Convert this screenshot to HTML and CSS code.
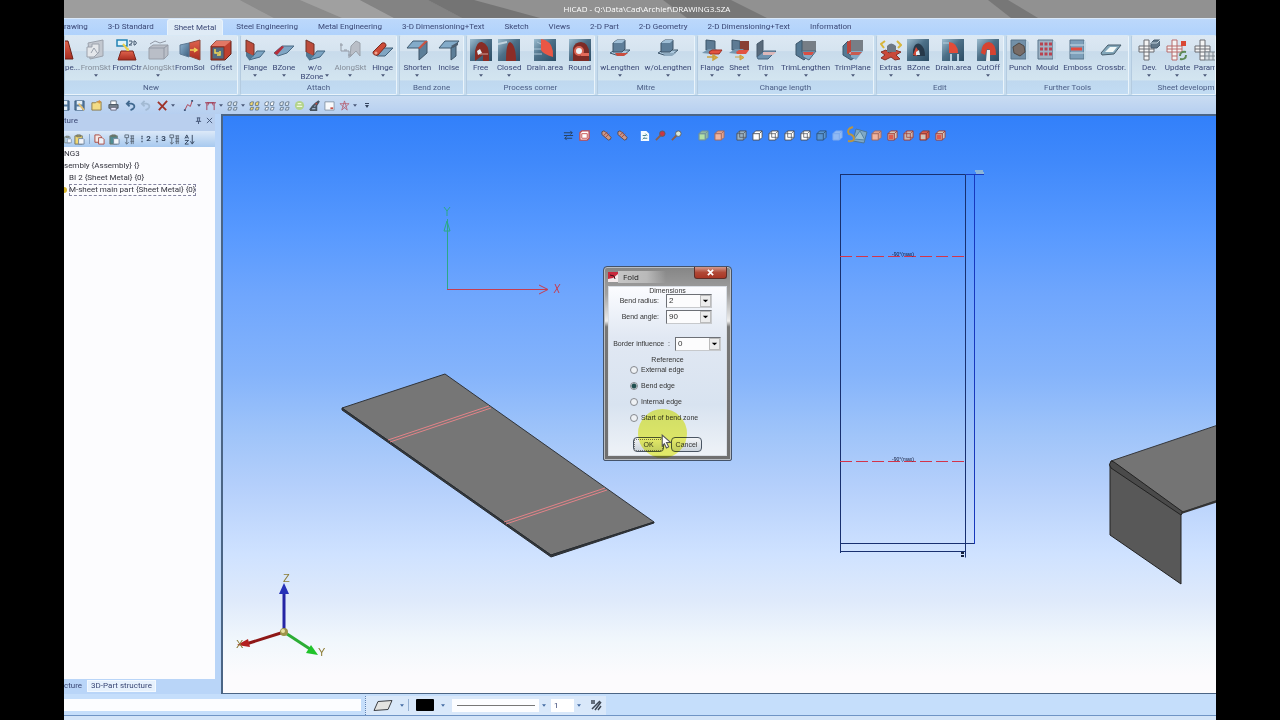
FILE: index.html
```html
<!DOCTYPE html>
<html lang="en">
<head>
<meta charset="utf-8">
<title>HiCAD - Q:\Data\Cad\Archief\DRAWING3.SZA</title>
<link rel="stylesheet" href="styles.css">
</head>
<body>
<svg class="defs" aria-hidden="true">
<defs>
<linearGradient id="steel" x1="0" y1="0" x2="1" y2="1"><stop offset="0" stop-color="#8fb4d2"/><stop offset="1" stop-color="#3c5d7c"/></linearGradient>
<linearGradient id="photo" x1="0" y1="0" x2="1" y2="1"><stop offset="0" stop-color="#9dbdd0"/><stop offset=".45" stop-color="#4d7088"/><stop offset="1" stop-color="#2c4c64"/></linearGradient>
<linearGradient id="red" x1="0" y1="0" x2="0" y2="1"><stop offset="0" stop-color="#e0644e"/><stop offset="1" stop-color="#a82c20"/></linearGradient>
</defs>
<symbol id="cone" viewBox="0 0 22 22"><path d="M6 2h10l5 18H1z" fill="url(#red)" stroke="#6b2018"/></symbol>
<symbol id="sketch" viewBox="0 0 22 22"><path d="M3 4l15-3v16l-13 3z" fill="#c3c8d0" stroke="#9ba2ad"/><path d="M2 8h5v-3h7v8l-5 5H2zM6 14l3-5 4 6" fill="#e4e7eb" stroke="#9aa1ac"/></symbol>
<symbol id="contour" viewBox="0 0 22 22"><path d="M5 12h12l3 9H2z" fill="url(#red)" stroke="#7c261c"/><path d="M1 1h10v6H1z" fill="#dff3fa" stroke="#2382b4" stroke-width="1.5"/><path d="M7 5l5 6" stroke="#ead04a" stroke-width="2"/><path d="M10 12l3 0 0-3z" fill="#ead04a"/><path d="M13 2h3v2l-3 2h3M18 2v4h1q3-2 0-4z" fill="none" stroke="#465a70"/></symbol>
<symbol id="along" viewBox="0 0 22 22"><path d="M2 9l4-3h15v10l-4 4H2z" fill="#b9bec7" stroke="#999fa9"/><path d="M2 9h15v11M17 9l4-3M3 5l5-3 5 2 6-2" fill="none" stroke="#9299a5"/></symbol>
<symbol id="solid" viewBox="0 0 22 22"><path d="M10 4l11-3v20l-11-4z" fill="url(#red)" stroke="#8c4a3e"/><path d="M1 6l9-2v14l-9-3z" fill="url(#steel)" stroke="#5c7994"/><path d="M11 11h6M15 9l3 2-3 2" fill="none" stroke="#f2d257" stroke-width="1.5"/></symbol>
<symbol id="offset" viewBox="0 0 22 22"><path d="M1 7l5-5h15v13l-6 6H1z" fill="#bf4030" stroke="#642018"/><path d="M2 8h12v12H2z" fill="#526a80" stroke="#813025"/><path d="M1 7l5-5h15l-6 5z" fill="#e27765"/><path d="M5 10v4h4M10 12v4h-3" fill="none" stroke="#f3d855" stroke-width="1.5"/></symbol>
<symbol id="flange" viewBox="0 0 22 22"><path d="M2 1l8 4v13l-8-5z" fill="#bd4c3c" stroke="#713027"/><path d="M10 16l3-4h8l-5 6-11 3z" fill="#7ba4c3" stroke="#456782"/><path d="M2 13l8 4-5 4-3-4z" fill="#537894"/></symbol>
<symbol id="plate" viewBox="0 0 22 22"><path d="M1 14l8-7h12l-7 7-9 3z" fill="#7fa5c4" stroke="#4c6b84"/><path d="M1 14l8-7 2 1-7 8z" fill="#b72e3b"/></symbol>
<symbol id="alongsmall" viewBox="0 0 22 22"><path d="M12 7l5-5 4 2v13l-4-5-6 6z" fill="#b9bec7" stroke="#9aa1aa"/><path d="M2 4v8h8v7M1 6h3M5 11h3M9 16h4" fill="none" stroke="#939aa5"/></symbol>
<symbol id="hinge" viewBox="0 0 22 22"><path d="M4 16l8-7h9l-8 8H5z" fill="#80a5c2" stroke="#426079"/><path d="M1 13L10 4q4-1 4 3L6 16q-5 1-5-3z" fill="#cc4b38" stroke="#7a2a20"/><circle cx="4" cy="14" r="1.5" fill="#f0a390"/></symbol>
<symbol id="bend" viewBox="0 0 22 22"><path d="M1 9l6-7h14l-6 7z" fill="#83abc9" stroke="#405a70"/><path d="M13 9l8-6v11l-8 7z" fill="#5c7e98" stroke="#3e5568"/><path d="M12 9l7-7h3l-8 8z" fill="#c95342"/></symbol>
<symbol id="incise" viewBox="0 0 22 22"><path d="M1 9l6-7h14l-6 7z" fill="#83abc9" stroke="#405a70"/><path d="M13 9l5-3v11l-5 4z" fill="#5c7e98" stroke="#3e5568"/><path d="M13 7l7-4v3l-5 3z" fill="#4c5e70"/></symbol>
<symbol id="free" viewBox="0 0 22 22"><path d="M0 0h22v22H0z" fill="url(#photo)"/><path d="M5 22V12Q7 2 12 3q7 2 7 14v5h-6v-6z" fill="#892c25"/><path d="M7 12l3-2 2 4-4 2z" fill="#e8eff4"/><path d="M10 15h8" stroke="#d3a19b"/></symbol>
<symbol id="closed" viewBox="0 0 22 22"><path d="M0 0h22v22H0z" fill="url(#photo)"/><path d="M8 22Q8 4 12 3q6 3 6 19z" fill="#8c2d26"/><path d="M0 5l9-2" stroke="#c1d3df" stroke-width="2"/></symbol>
<symbol id="drain" viewBox="0 0 22 22"><path d="M0 0h22v22H0z" fill="url(#photo)"/><path d="M7 0v11q2 4 12 7Q20 5 11 1z" fill="#ea5745"/><path d="M0 10h7M0 15h8M3 3l4 2" stroke="#abc4d5"/></symbol>
<symbol id="drainedit" viewBox="0 0 22 22"><path d="M0 0h22v22H0z" fill="url(#photo)"/><path d="M7 14V3q9 1 9 11z" fill="#e24c38"/><path d="M9 15v7M16 15v7" stroke="#b5cddc" stroke-width="2"/><path d="M1 4h6" stroke="#b5cddc"/></symbol>
<symbol id="zoneedit" viewBox="0 0 22 22"><path d="M0 0h22v22H0z" fill="url(#photo)"/><path d="M6 17V11Q8 3 13 5q5 3 5 12z" fill="#27394a"/><path d="M6 16l3-8 2 3-1 6z" fill="#d54835"/><path d="M9 13l3-2 1 5H9z" fill="#e8eff4"/></symbol>
<symbol id="round" viewBox="0 0 22 22"><path d="M0 0h22v22H0z" fill="url(#photo)"/><path d="M4 22V9q2-6 8-6 8 1 8 11v8z" fill="#7d2b26"/><circle cx="10" cy="12" r="4" fill="#eef2f5" stroke="#d96554" stroke-width="2"/><path d="M12 14h8v3h-8z" fill="#e46a5a"/></symbol>
<symbol id="mitre" viewBox="0 0 22 22"><path d="M1 14l5-3h15l-6 5H7z" fill="#a9c6dc" stroke="#3e566b"/><path d="M6 14h13l-4 3H8z" fill="var(--accent)"/><path d="M4 4l4-3h8v9l-3 3H4z" fill="#5e7e99" stroke="#3d5367"/><path d="M4 4l4-3h8l-3 3z" fill="#a0bfd7"/></symbol>
<symbol id="pull" viewBox="0 0 22 22"><path d="M5 1l9 1v9H5z" fill="#5d7b94" stroke="#3d566b"/><path d="M1 14l6-4h9l-6 5z" fill="#7597b0"/><path d="M8 13l3-2h10l-3 4H9z" fill="#e25341" stroke="#9d3025"/><path d="M6 18h7M12 16l4 2.500-4 2.500z" fill="#dcb04d" stroke="#cca23f" stroke-width="1.500"/></symbol>
<symbol id="pullsheet" viewBox="0 0 22 22"><path d="M4 1l8 1v9H4z" fill="#5d7b94" stroke="#3d566b"/><path d="M12 2l9 0v9h-9z" fill="#893f35"/><path d="M1 14l6-4h9l-6 5z" fill="#7597b0"/><path d="M8 13l3-2h10l-3 4H9z" fill="#e25341"/><path d="M7 18h6M12 16l4 2.500-4 2.500z" fill="#dcb04d" stroke="#cca23f"/></symbol>
<symbol id="trim" viewBox="0 0 22 22"><path d="M2 5l6-4v12l-6 5z" fill="#596a7b" stroke="#46596a"/><path d="M2 18l7-6h12l-8 8H3z" fill="#6f93b0" stroke="#486680"/><path d="M8 13h13l-3 3H8z" fill="#ddb8b9"/></symbol>
<symbol id="box" viewBox="0 0 22 22"><path d="M6 2h15v10H6z" fill="#777e86"/><path d="M1 5l6-4v12l5 5-3 3-8-5z" fill="#547893" stroke="#3d566b"/><path d="M7 12h14l-7 9-6-3z" fill="#83a9c6" stroke="#4b687f"/><path d="M8 13h11l-2 3H9z" fill="#d84e43"/></symbol>
<symbol id="boxplane" viewBox="0 0 22 22"><path d="M8 1h13v11H8z" fill="#777e86"/><path d="M1 7l5-5v12l6 5-3 2-8-5z" fill="#547893" stroke="#3d566b"/><path d="M5 3l4-2v12l-4 2z" fill="#bb443b"/><path d="M9 12h12l-7 9-5-3z" fill="#83a9c6"/><path d="M9 13h11l-3 3h-9z" fill="#c95b50"/></symbol>
<symbol id="extras" viewBox="0 0 22 22"><path d="M1 13l5-2 3 3 6-3 6 2-5 3 4 4-5 1-4-3-6 3-4-2 4-3z" fill="#c9493a" stroke="#823229"/><path d="M7 7q4-5 9 0v6H7z" fill="#6d7884"/><path d="M5 2L1 5l3 4M17 2l4 4-3 3" fill="none" stroke="#d8b63b" stroke-width="2"/></symbol>
<symbol id="cut" viewBox="0 0 22 22"><path d="M0 0h22v22H0z" fill="url(#photo)"/><path d="M4 14Q5 3 12 3q7 1 7 13h-6q1-7-3-6l-2 6z" fill="#d74331"/><path d="M10 11h3v11H9z" fill="#e7edf1"/></symbol>
<symbol id="punch" viewBox="0 0 22 22"><path d="M2 1h15v19H2z" fill="#7290a8" stroke="#58748b"/><path d="M17 1l3 2v17h-3z" fill="#c2d7e5"/><path d="M10 4l5 3 1 6-5 4-6-3-1-6z" fill="#786c66" stroke="#4f4945"/></symbol>
<symbol id="mould" viewBox="0 0 22 22"><path d="M2 1h15v19H2z" fill="#9db2c4" stroke="#58748b"/><path d="M17 1l3 2v17h-3z" fill="#c2d7e5"/><path d="M4 5h12M4 10h12M4 15h12" stroke="#ba4250" stroke-width="3" stroke-dasharray="3 1.500"/></symbol>
<symbol id="emboss" viewBox="0 0 22 22"><path d="M3 1h14v19H3z" fill="#7d9fba" stroke="#58748b"/><path d="M17 1l2 2v17h-2z" fill="#c2d7e5"/><path d="M3 6h14M3 14h14" stroke="#c9dde9"/><path d="M4 10h11" stroke="#e14c40" stroke-width="3"/></symbol>
<symbol id="cross" viewBox="0 0 22 22"><path d="M1 14l7-8h13l-7 9-12 1z" fill="#83a7ba" stroke="#465d6c"/><path d="M5 13l5-5h7l-4 5z" fill="#f1f8f8"/></symbol>
<symbol id="dev" viewBox="0 0 22 22"><path d="M6 1h5v6h5v6h-5v8H6v-8H1V7h5zM6 7h5v6H6zM1 10h15M6 17h5" fill="#f4f4f4" stroke="var(--line,#6b6d72)"/></symbol>
<symbol id="devbox" viewBox="0 0 22 22"><use href="#dev"/><path d="M13 4l3-3h6v5l-3 3h-6z" fill="#617789" stroke="#485d6e"/><path d="M13 4h6l3-3" fill="none" stroke="#c1d2dd"/></symbol>
<symbol id="devnew" viewBox="0 0 22 22"><use href="#dev"/><path d="M15 2h5v5h-5z" fill="#da4834"/><path d="M14 17q0-5 6-4M20 16q0 5-6 4" fill="none" stroke="#5d8956" stroke-width="2"/></symbol>
<symbol id="devtable" viewBox="0 0 22 22"><use href="#dev"/><path d="M11 13h11v8H11zM11 17h11M15 13v8M19 13v8" fill="#d8dee3" stroke="#7d8790"/></symbol>
<symbol id="cube" viewBox="0 0 12 12"><path d="M1 4l3-3h7v7l-3 3H1z" fill="var(--face)" stroke="var(--edge)"/><path d="M1 4h7v7M8 4l3-3" fill="none" stroke="var(--edge)"/><path d="M2 5h5v5H2z" fill="var(--front,transparent)"/></symbol>
<symbol id="wire" viewBox="0 0 12 12"><path d="M1 4l3-3h7v7l-3 3H1z" fill="var(--face)" stroke="var(--edge)"/><path d="M1 4h7v7M8 4l3-3M4 1v7h7" fill="none" stroke="var(--edge)" stroke-width=".8"/></symbol>
<symbol id="box2" viewBox="0 0 12 12"><path d="M1 3l2-2h8v8l-2 2H1z" fill="#fff" stroke="var(--edge)" stroke-width="1.500"/><path d="M3 4h6v5H3z" fill="none" stroke="var(--edge)"/></symbol>
<symbol id="link" viewBox="0 0 12 12"><path d="M1 2q2-2 4 0l6 6q0 3-3 3L1 5z" fill="#c9988b" stroke="#5d4a4c"/><path d="M3 6l4-4M5 8l4-4" stroke="#a0463f"/></symbol>
<symbol id="swap" viewBox="0 0 12 12"><path d="M1 3h9M8 1l2 2-2 2M11 6H1M10 9H2M4 7L2 9l2 2" fill="none" stroke="#263d55"/></symbol>
<symbol id="sheetpage" viewBox="0 0 12 12"><path d="M2 1h6l3 3v8H2z" fill="#f5fbff"/><path d="M4 6h4M7 4l2 2M9 9H5M6 8L4 10" stroke="#397b88"/></symbol>
<symbol id="lens" viewBox="0 0 12 12"><path d="M1 11l5-5" stroke="#8b5f4c" stroke-width="2"/><circle cx="8" cy="4" r="3" fill="var(--face)" stroke="#5c5e63"/></symbol>
<symbol id="save" viewBox="0 0 12 12"><path d="M1 1h10v10H1z" fill="#557a9f" stroke="#39597a"/><path d="M3 1h6v4H3zM3 7h6v4H3z" fill="#e3eef6"/></symbol>
<symbol id="saveas" viewBox="0 0 12 12"><use href="#save"/><path d="M5 4l6 7" stroke="#e1bd72" stroke-width="2"/></symbol>
<symbol id="folder" viewBox="0 0 12 12"><path d="M1 3h4l1-1h5v9H1z" fill="#f3dc86" stroke="#8b7947"/><path d="M9 0v4M7 2h4" stroke="#df8d34"/></symbol>
<symbol id="printer" viewBox="0 0 12 12"><path d="M3 1h6v4H3z" fill="#fff" stroke="#64707d"/><path d="M1 5h10v4H1z" fill="#78838e" stroke="#48545f"/><path d="M3 8h6v3H3z" fill="#eef" stroke="#667"/></symbol>
<symbol id="undo" viewBox="0 0 12 12"><path d="M2 4h5q4 1 3 4-1 2-4 3M5 1L2 4l3 3" fill="none" stroke="currentColor" stroke-width="2"/></symbol>
<symbol id="delete" viewBox="0 0 12 12"><path d="M1 2l9 9M11 1L2 11" stroke="#9e3329" stroke-width="2"/></symbol>
<symbol id="poly" viewBox="0 0 12 12"><path d="M2 11l3-6 3 2 2-6" fill="none" stroke="#ad3b4c"/><path d="M1 10h2v2H1zM9 0h2v2H9z" fill="#3e557b"/></symbol>
<symbol id="gate" viewBox="0 0 12 12"><path d="M2 11V3h8v8M0 3h12M4 3l-1 3M8 3l1 3" fill="none" stroke="#a33c53"/></symbol>
<symbol id="pairs" viewBox="0 0 12 12"><path d="M1 3l2-1h2L4 6H1zM7 3l2-1h2l-1 4H7zM2 8h3l-1 3H1zM8 8h3l-1 3H7z" fill="var(--face,#dce6ec)" stroke="#53677b" stroke-width=".8"/></symbol>
<symbol id="globe" viewBox="0 0 12 12"><circle cx="6" cy="6" r="5" fill="#b3d38b"/><path d="M3 7h6M4 4h4" stroke="#eff8d9" stroke-width="1.500"/></symbol>
<symbol id="robot" viewBox="0 0 12 12"><path d="M1 11h7V6L11 1M1 11l3-4 3-3 4-3M3 8h5" fill="none" stroke="#475461" stroke-width="2"/><circle cx="8" cy="4" r="1" fill="#ce4940"/></symbol>
<symbol id="window" viewBox="0 0 12 12"><path d="M1 2h10v9H1z" fill="#f8fafc" stroke="#8495a7"/><path d="M7 8h3v2H7z" fill="#c64f45"/></symbol>
<symbol id="star" viewBox="0 0 12 12"><path d="M1 4h10L3 11 6 1l3 10z" fill="none" stroke="#b4586a" stroke-width=".8"/></symbol>
<symbol id="copy" viewBox="0 0 12 12"><path d="M1 1h5l2 2v6H1z" fill="#f5e9e6" stroke="#a9453a"/><path d="M5 4h4l2 2v5H5z" fill="#edf3fa" stroke="#ac4b43"/></symbol>
<symbol id="paste" viewBox="0 0 12 12"><path d="M1 2h8v9H1zM3 1h4v2H3z" fill="var(--face)" stroke="#6d7163"/><path d="M5 5h5l1 1v5H5z" fill="#f3f6fa" stroke="#7187a0"/></symbol>
<symbol id="tree" viewBox="0 0 12 12"><path d="M1 1h4v3H1zM3 4v7M1 9l2 2 2-2M7 2h4M7 5h4M7 8h4M8 2v9M10 2v9" fill="none" stroke="#5b6979"/></symbol>
<symbol id="down" viewBox="0 0 5 3"><path d="M0 0h5L2.500 3z" fill="currentColor"/></symbol>
</svg>

<div class="app">
<header class="title">
<svg class="gloss" viewBox="0 0 1152 18" preserveAspectRatio="none" aria-hidden="true">
<path d="M0 0h176l34 18H0z" fill="#9d9d9d"/><path d="M176 0h60l42 18h-68z" fill="#8b8b8b"/><path d="M236 0h60l34 18h-52z" fill="#a0a0a0"/><path d="M296 0h68l34 18h-68z" fill="#838383"/><path d="M364 0h46l66 18h-78z" fill="#747474"/><path d="M599 0h68l36 18h-80z" fill="#777"/><path d="M924 0h20l30 18h-27z" fill="#777"/>
</svg>
<h1>HiCAD - Q:\Data\Cad\Archief\DRAWING3.SZA</h1>
</header>
<nav class="tabs">
<button class="first">rawing</button><button>3-D Standard</button><button class="active">Sheet Metal</button><button>Steel Engineering</button><button>Metal Engineering</button><button>3-D Dimensioning+Text</button><button>Sketch</button><button>Views</button><button>2-D Part</button><button>2-D Geometry</button><button>2-D Dimensioning+Text</button><button>Information</button>
</nav>
<div class="ribbon">
<section class="group g-new"><div class="tools even">
<button class="clipped"><svg><use href="#cone"/></svg>pe...</button>
<button class="off"><svg><use href="#sketch"/></svg>FromSkt<svg class="caret"><use href="#down"/></svg></button>
<button><svg><use href="#contour"/></svg>FromCtr</button>
<button class="off"><svg><use href="#along"/></svg>AlongSkt<svg class="caret"><use href="#down"/></svg></button>
<button><svg><use href="#solid"/></svg>FromSol</button>
<button><svg><use href="#offset"/></svg>Offset</button></div><h2>New</h2></section>
<section class="group g-attach"><div class="tools">
<button><svg><use href="#flange"/></svg>Flange<svg class="caret"><use href="#down"/></svg></button>
<button><svg><use href="#plate"/></svg>BZone<svg class="caret"><use href="#down"/></svg></button>
<button><svg><use href="#flange"/></svg>w/o<span>BZone <svg class="caret"><use href="#down"/></svg></span></button>
<button class="off"><svg><use href="#alongsmall"/></svg>AlongSkt<svg class="caret"><use href="#down"/></svg></button>
<button><svg><use href="#hinge"/></svg>Hinge<svg class="caret"><use href="#down"/></svg></button></div><h2>Attach</h2></section>
<section class="group g-bend"><div class="tools">
<button><svg><use href="#bend"/></svg>Shorten<svg class="caret"><use href="#down"/></svg></button>
<button><svg><use href="#incise"/></svg>Incise</button></div><h2>Bend zone</h2></section>
<section class="group g-corner"><div class="tools">
<button><svg><use href="#free"/></svg>Free<svg class="caret"><use href="#down"/></svg></button>
<button><svg><use href="#closed"/></svg>Closed<svg class="caret"><use href="#down"/></svg></button>
<button><svg><use href="#drain"/></svg>Drain.area</button>
<button><svg><use href="#round"/></svg>Round</button></div><h2>Process corner</h2></section>
<section class="group g-mitre"><div class="tools">
<button class="with-red"><svg><use href="#mitre"/></svg>wLengthen<svg class="caret"><use href="#down"/></svg></button>
<button><svg><use href="#mitre"/></svg>w/oLengthen<svg class="caret"><use href="#down"/></svg></button></div><h2>Mitre</h2></section>
<section class="group g-length"><div class="tools">
<button><svg><use href="#pull"/></svg>Flange<svg class="caret"><use href="#down"/></svg></button>
<button><svg><use href="#pullsheet"/></svg>Sheet<svg class="caret"><use href="#down"/></svg></button>
<button><svg><use href="#trim"/></svg>Trim<svg class="caret"><use href="#down"/></svg></button>
<button><svg><use href="#box"/></svg>TrimLengthen<svg class="caret"><use href="#down"/></svg></button>
<button><svg><use href="#boxplane"/></svg>TrimPlane<svg class="caret"><use href="#down"/></svg></button></div><h2>Change length</h2></section>
<section class="group g-edit"><div class="tools">
<button><svg><use href="#extras"/></svg>Extras<svg class="caret"><use href="#down"/></svg></button>
<button><svg><use href="#zoneedit"/></svg>BZone<svg class="caret"><use href="#down"/></svg></button>
<button><svg><use href="#drainedit"/></svg>Drain.area</button>
<button><svg><use href="#cut"/></svg>CutOff<svg class="caret"><use href="#down"/></svg></button></div><h2>Edit</h2></section>
<section class="group g-further"><div class="tools">
<button><svg><use href="#punch"/></svg>Punch</button>
<button><svg><use href="#mould"/></svg>Mould</button>
<button><svg><use href="#emboss"/></svg>Emboss</button>
<button><svg><use href="#cross"/></svg>Crossbr.</button></div><h2>Further Tools</h2></section>
<section class="group g-dev"><div class="tools">
<button><svg><use href="#devbox"/></svg>Dev.<svg class="caret"><use href="#down"/></svg></button>
<button class="red-line"><svg><use href="#devnew"/></svg>Update<svg class="caret"><use href="#down"/></svg></button>
<button><svg><use href="#devtable"/></svg>Param<svg class="caret"><use href="#down"/></svg></button></div><h2>Sheet developm</h2></section>
</div>

<div class="quick">
<button class="cut-left" aria-label="Save"><svg><use href="#save"/></svg></button>
<button aria-label="Save as"><svg><use href="#saveas"/></svg></button>
<button class="gap" aria-label="Open"><svg><use href="#folder"/></svg></button>
<button class="gap" aria-label="Print"><svg><use href="#printer"/></svg></button>
<button class="gap undo" aria-label="Undo"><svg><use href="#undo"/></svg></button>
<button class="redo" aria-label="Redo"><svg><use href="#undo"/></svg></button>
<button class="gap" aria-label="Delete"><svg><use href="#delete"/></svg></button><svg class="caret"><use href="#down"/></svg>
<i></i>
<button aria-label="Polyline"><svg><use href="#poly"/></svg></button><svg class="caret"><use href="#down"/></svg>
<button aria-label="Frame"><svg><use href="#gate"/></svg></button><svg class="caret"><use href="#down"/></svg>
<button aria-label="Parts"><svg><use href="#pairs"/></svg></button><svg class="caret"><use href="#down"/></svg>
<button class="c-yellow" aria-label="Highlight parts"><svg><use href="#pairs"/></svg></button>
<button class="c-white" aria-label="Hide parts"><svg><use href="#pairs"/></svg></button>
<button aria-label="Show parts"><svg><use href="#pairs"/></svg></button>
<button aria-label="Refresh"><svg><use href="#globe"/></svg></button>
<button aria-label="Machine"><svg><use href="#robot"/></svg></button>
<button aria-label="Window"><svg><use href="#window"/></svg></button>
<button aria-label="Point"><svg><use href="#star"/></svg></button><svg class="caret"><use href="#down"/></svg>
<button aria-label="More"><svg class="more" viewBox="0 0 6 7"><path d="M1 1h4v1H1zM1 3h4L3 6z" fill="#33435d"/></svg></button>
</div>

<main class="work">
<aside class="panel">
<header><span>ture</span><button aria-label="Pin"><svg viewBox="0 0 8 8"><path d="M2 1h4M3 1v4M5 1v4M1 5h6M4 5v3" fill="none" stroke="#3e4f70"/></svg></button><button aria-label="Close panel"><svg viewBox="0 0 8 8"><path d="M1 1l6 6M7 1L1 7" stroke="#3e4f70"/></svg></button></header>
<div class="panel-tools">
<button class="narrow c-sky" aria-label="Paste part"><svg><use href="#paste"/></svg></button>
<button class="c-yellow" aria-label="Paste"><svg><use href="#paste"/></svg></button>
<i></i>
<button aria-label="Copy"><svg><use href="#copy"/></svg></button>
<button class="c-teal" aria-label="Insert"><svg><use href="#paste"/></svg></button>
<button aria-label="Expand"><svg><use href="#tree"/></svg></button>
<button>&#8942;2</button><button>&#8942;3</button>
<button aria-label="Collapse"><svg><use href="#tree"/></svg></button>
<button class="sort" aria-label="Sort"><svg viewBox="0 0 12 12"><path d="M1 5l2-4 2 4M2 4h2M1 7h4l-4 4h4M9 1v9M7 8l2 3 2-3" fill="none" stroke="#33445c"/></svg></button>
</div>
<ul class="parts"><li>NG3</li><li>sembly {Assembly} {}</li><li class="child">BI 2 {Sheet Metal} {0}</li><li class="child current"><span>M-sheet main part {Sheet Metal} {0}</span></li></ul>
<footer><button>cture</button><button class="active">3D-Part structure</button></footer>
</aside>

<section class="view">
<svg class="drawing" role="img" aria-label="Sheet metal model">
<g transform="translate(-223 -116)">
<g stroke="#2ca887" fill="none"><path d="M447.500 289v-70"/><path d="M444 231l3-10 3 10z"/><path d="M444 207l3 4 3-4M447 211v5"/></g>
<g stroke="#c63d50" fill="none"><path d="M447 289.500h100M539 285l9 4.500-9 4.500"/><path d="M554 293l6-9M555 284l4 9"/></g>
<path d="M342 408l103-34 209 148-103 33z" fill="#767676" stroke="#30343a"/>
<path d="M342 408v2l209 147 103-34v-1l-103 33z" fill="#35393d" stroke="#282c30"/>
<g fill="none" stroke="#e38388"><path d="M388 440l101-34M390 442l101-34M504 522l101-34M506 524l101-34"/></g>
<path d="M1111 461l110-37v75l-40 14z" fill="#747474" stroke="#34363a"/>
<path d="M1111 464l70 50v70l-71-49v-71z" fill="#585858" stroke="#222"/>
<path d="M1111 461q-3 4 0 7l70 47 2-3-69-50z" fill="#4a4a4a" stroke="#222"/>
<path d="M1181 513l40-13" stroke="#333" stroke-width="2"/>
<g fill="none" stroke="#183070"><path d="M840.500 174.500h125v383M840.500 174v379M840 543.500h135M840 551.500h126"/><path d="M966 174.500h18M974.500 174v370" stroke="#1838bd"/></g>
<path d="M840 256.500h126" stroke="#d3344a" stroke-dasharray="12 4"/>
<path d="M840 461.500h126" stroke="#d3344a" stroke-dasharray="12 4"/>
<g class="dim"><text x="903" y="256">-90°(max)</text><text x="903" y="461">-90°(max)</text></g>
<path d="M975 171h8M976 173h8" stroke="#d4dfb4"/><path d="M961 552h3v2h-3zM961 555h3v2h-3z" fill="#14203a"/>
<path d="M284 632l-38 12" stroke="#8e1717" stroke-width="3"/><path d="M237 645l11-6 2 8z" fill="#b32020"/>
<path d="M284 632l26 17" stroke="#2cad35" stroke-width="3"/><path d="M318 655l-12-2 5-8z" fill="#20c32b"/>
<path d="M284 632v-39" stroke="#2525a5" stroke-width="3"/><path d="M279 594l5-11 5 11z" fill="#2631b8"/><circle cx="284" cy="632" r="4" fill="#9d944a"/><circle cx="283" cy="631" r="2" fill="#e8dfa0"/>
<g class="axis"><text x="283" y="582">Z</text><text x="236" y="648">X</text><text x="318" y="656">Y</text></g>
</g></svg>

<div class="viewbar">
<button aria-label="Swap"><svg><use href="#swap"/></svg></button><button class="v-redwire" aria-label="Box"><svg><use href="#box2"/></svg></button><i></i>
<button aria-label="Measure"><svg><use href="#link"/></svg></button><button aria-label="Link"><svg><use href="#link"/></svg></button><i></i>
<button aria-label="Redraw"><svg><use href="#sheetpage"/></svg></button><button class="v-redlens" aria-label="Zoom in"><svg><use href="#lens"/></svg></button><button class="v-lens" aria-label="Zoom"><svg><use href="#lens"/></svg></button><i class="wide"></i>
<button class="v-green" aria-label="Shade"><svg><use href="#cube"/></svg></button><button class="v-salmon" aria-label="Shade part"><svg><use href="#cube"/></svg></button><i></i>
<button class="v-gray" aria-label="Wireframe"><svg><use href="#wire"/></svg></button><button class="v-white" aria-label="Hidden"><svg><use href="#cube"/></svg></button><button class="v-white" aria-label="Dashed"><svg><use href="#wire"/></svg></button><button class="v-white" aria-label="Hidden grey"><svg><use href="#wire"/></svg></button><button class="v-white" aria-label="Quick"><svg><use href="#wire"/></svg></button><button class="v-blue" aria-label="Shaded edges"><svg><use href="#cube"/></svg></button><button class="v-fade" aria-label="Shaded"><svg><use href="#cube"/></svg></button>
<button class="spin" aria-label="Rotate"><svg viewBox="0 0 22 20"><path d="M10 4l11 3-3 11-11-2z" fill="#7fa8c5" stroke="#4e7799"/><path d="M8 14l6-8 5 9z" fill="#9fc3d4" stroke="#5685a3"/><path d="M7 2Q0 4 3 9q5 1 5 5-1 3-6 2" fill="none" stroke="#bc9640" stroke-width="2"/></svg></button>
<button class="v-salmon" aria-label="Top"><svg><use href="#cube"/></svg></button><button class="v-red" aria-label="Front"><svg><use href="#cube"/></svg></button><button class="v-redwire2" aria-label="Right"><svg><use href="#wire"/></svg></button><button class="v-redtop" aria-label="Back"><svg><use href="#cube"/></svg></button><button class="v-red" aria-label="Bottom"><svg><use href="#cube"/></svg></button>
</div>

<form class="dialog">
<header><svg viewBox="0 0 10 10"><path d="M0 0h10v10H0z" fill="#c8283c"/><path d="M0 7l5-1 5-4v8H0z" fill="#f2e9ea"/><path d="M2 3l4 1 1 3" stroke="#401018" fill="none"/></svg><h3>Fold</h3><button type="button" class="close" aria-label="Close"><svg viewBox="0 0 8 8"><path d="M1 1l6 6M7 1L1 7" stroke="#fff" stroke-width="2"/></svg></button></header>
<div class="body">
<h4>Dimensions</h4>
<div class="field"><label for="radius">Bend radius:</label><span class="combo"><select id="radius"><option>2</option></select><svg viewBox="0 0 10 11"><path d="M2 4h6L5 7z"/></svg></span></div>
<div class="field"><label for="angle">Bend angle:</label><span class="combo"><select id="angle"><option>90</option></select><svg viewBox="0 0 10 11"><path d="M2 4h6L5 7z"/></svg></span></div>
<div class="field border"><label for="border">Border influence &nbsp;:</label><span class="combo"><select id="border"><option>0</option></select><svg viewBox="0 0 10 11"><path d="M2 4h6L5 7z"/></svg></span></div>
<fieldset><legend>Reference</legend>
<label><input type="radio" name="ref">External edge</label>
<label><input type="radio" name="ref" checked>Bend edge</label>
<label><input type="radio" name="ref">Internal edge</label>
<label><input type="radio" name="ref">Start of bend zone</label></fieldset>
<div class="actions"><button type="button" class="ok"><span>OK</span></button><button type="button">Cancel</button></div>
</div>
<span class="halo"></span>
<svg class="pointer" viewBox="0 0 10 14"><path d="M1 1v10l2-2 2 4 2-1-2-4h4z" fill="#fff" stroke="#555"/></svg>
</form>
</section>
</main>

<footer class="status">
<input type="text" aria-label="Command">
<div class="format">
<button aria-label="Sheet style"><svg class="sheet" viewBox="0 0 20 12"><path d="M5 2l14-1-4 9-14 1z" fill="#e3e3e1" stroke="#3c3f44"/></svg></button><svg class="caret"><use href="#down"/></svg>
<i></i><button class="swatch" aria-label="Colour"></button><svg class="caret"><use href="#down"/></svg>
<button class="line" aria-label="Line type"><span></span></button><svg class="caret box"><use href="#down"/></svg>
<input class="weight" type="text" value="1" aria-label="Line weight"><svg class="caret box"><use href="#down"/></svg>
<button class="brush" aria-label="Format"><svg viewBox="0 0 12 12"><path d="M2 10L10 2M5 11l6-8M8 11l3-4M1 2h4M1 4h4" stroke="#3c4654" stroke-width="1.500"/></svg></button>
</div>
</footer>
</div>
</body>
</html>
```

FILE: styles.css
```css
* { box-sizing: border-box; }
body { margin: 0; padding: 0 5%; background: #000; font: 8px/10px Roboto, "Noto Sans", sans-serif; color: #3a4775; }
button, input, select { font: inherit; color: inherit; margin: 0; padding: 0; border: 0; background: none; }
h1, h2, h3, h4 { margin: 0; font: inherit; }
i { flex: none; width: 6px; }
.defs { position: absolute; width: 0; height: 0; }
.app { display: flex; flex-direction: column; height: 100vh; overflow: hidden; background: #b9d4f5; }
.caret { width: 4px; height: 3px; flex: none; color: #4a5878; }

.title { position: relative; height: 18px; flex: none; background: #919191; color: #fff; }
.title h1 { position: relative; text-align: center; font: 8px/18px "Open Sans", sans-serif; padding-left: 14px; }
.gloss { position: absolute; width: 100%; height: 100%; }

.tabs { display: flex; flex: none; height: 17px; background: linear-gradient(#bcd8fb, #b0d2fc); border-top: 1px solid #d9e8fa; }
.tabs button { padding: 0 10px; white-space: nowrap; }
.tabs .first { padding-left: 0; }
.tabs .active { padding: 0 6px; margin: 0 3px; background: #dfebf6; border: 1px solid #e8f3fc; border-bottom: 0; border-radius: 3px 3px 0 0; }

.ribbon { display: flex; flex: none; gap: 2px; height: 61px; background: #c6dcee; border-bottom: 1px solid #a6c4df; }
.group { display: flex; flex-direction: column; min-width: 0; overflow: hidden; border: 1px solid #eaf4fb; border-top-color: #d9e9f5; border-left-color: #b4cbe0; border-radius: 2px; background: linear-gradient(#dce8f3 0, #d6e4f0 25%, #c8dbeb 27%, #d3e5f0 75%, #bfd8ef 78%, #c2dcf3); }
.group h2 { text-align: center; line-height: 13px; white-space: nowrap; color: #4a5d85; }
.tools { display: flex; flex: 1; justify-content: space-around; padding-top: 3px; }
.tools button { display: flex; flex-direction: column; align-items: center; min-width: 22px; white-space: nowrap; line-height: 9px; --accent: #8da9bf; }
.tools button > svg:first-child { width: 22px; height: 22px; flex: none; margin-bottom: 2px; }
.tools .caret { margin-top: 2px; }
.tools span .caret { margin: 0 0 2px; }
.tools .off { color: #858d99; }
.even button { flex: 1 0 0; }
.even .clipped { flex: 0 0 15px; min-width: 0; align-items: flex-start; }
.even .clipped svg:first-child { margin-left: -13px; }
.tools .with-red { --accent: #c94d3f; }
.red-line { --line: #b86b6b; }
.g-new { flex: 175 1 0; }
.g-attach { flex: 158 1 0; }
.g-bend { flex: 64 1 0; }
.g-corner { flex: 129 1 0; }
.g-mitre { flex: 98 1 0; }
.g-length { flex: 178 1 0; }
.g-edit { flex: 128 1 0; }
.g-further { flex: 124 1 0; }
.g-dev { flex: 84 1 0; }
.g-dev .tools { justify-content: flex-start; gap: 2px; padding-left: 4px; }
.g-dev .tools button { flex: 0 0 26px; }
.g-dev h2 { text-align: left; padding-left: 25px; }

.quick { display: flex; align-items: center; flex: none; height: 18px; background: linear-gradient(#c9dcf2, #b6cff0); }
.quick button { flex: none; width: 15px; height: 14px; display: grid; place-items: center; }
.quick button svg { width: 11px; height: 11px; }
.quick button .more { width: 6px; height: 7px; }
.quick .caret { margin: 0 2px 0 1px; }
.quick i { width: 4px; }
.quick .cut-left { margin-left: -7px; }
.quick .gap { margin-left: 2px; }
.undo { color: #41698f; }
.redo { color: #a3bad3; }
.c-yellow { --face: #f0d772; }
.c-white { --face: #fff; }
.c-sky { --face: #b8d4eb; }
.c-teal { --face: #4f8d94; }

.work { display: flex; flex: 1; min-height: 0; }
.panel { display: flex; flex-direction: column; flex: none; width: 157px; padding-right: 6px; background: #b9d5f8; }
.panel header { display: flex; align-items: center; height: 17px; padding-bottom: 4px; background: #b9cfee; }
.panel header span { flex: 1; }
.panel header button { width: 11px; display: grid; place-items: center; }
.panel header svg { width: 7px; height: 7px; }
.panel-tools { display: flex; align-items: center; height: 16px; background: linear-gradient(#dce9f8, #a7c9ef); color: #33445c; }
.panel-tools button { flex: none; width: 15px; height: 14px; display: flex; align-items: center; justify-content: center; font-weight: 700; }
.panel-tools svg { width: 11px; height: 11px; }
.panel-tools .narrow { width: 8px; overflow: hidden; }
.panel-tools i { width: 1px; height: 10px; margin: 0 2px; background: #8ca9cb; }
.parts { flex: 1; margin: 0; padding: 1px 0; list-style: none; background: #fcfcfe; color: #33333d; white-space: nowrap; }
.parts li { height: 12px; line-height: 12px; }
.parts .child { padding-left: 5px; }
.parts .current { position: relative; }
.parts .current::before { content: ""; position: absolute; left: -3px; top: 3px; width: 6px; height: 6px; border-radius: 3px; background: #d8b62c; }
.parts .current span { display: inline-block; outline: 1px dashed #8585a0; outline-offset: -1px; }
.panel footer { display: flex; height: 15px; padding: 1px 0 2px; }
.panel footer button { padding: 0 5px 0 0; white-space: nowrap; }
.panel footer .active { padding: 0 3px; background: #e6f1fd; border: 1px solid #f3f9ff; }

.view { position: relative; flex: 1; min-width: 0; overflow: hidden; border: solid #4b6585; border-width: 2px 0 1px 2px; background: linear-gradient(#3280fa 0, #4089fb 8%, #5799ff 20%, #6fa6fd 31%, #85b4fb 45%, #9fc4f9 55%, #b4cffb 64%, #cfe2ff 76%, #dfeafb 84%, #f1f7fc 91%, #fcfbfd 97%); }
.drawing { position: absolute; width: 100%; height: 100%; }
.dim { font: 5px "Liberation Sans", sans-serif; fill: #101a38; text-anchor: middle; }
.axis { font: 11px "Liberation Sans", sans-serif; fill: #8b7c35; }
.viewbar { position: absolute; top: 9px; left: 34%; display: flex; align-items: center; height: 20px; --edge: #50545c; --face: #fff; }
.viewbar button { width: 16px; height: 16px; display: grid; place-items: center; }
.viewbar svg { width: 11px; height: 11px; }
.viewbar i.wide { width: 11px; }
.viewbar .spin { width: 23px; height: 20px; }
.viewbar .spin svg { width: 22px; height: 20px; }
.v-redwire { --edge: #c44d4d; }
.v-redwire2 { --edge: #a13d34; --face: #c8b7b0; }
.v-redlens { --face: #c93643; }
.v-lens { --face: #d9e6d5; }
.v-green { --face: #8fb7a4; --edge: #70909a; --front: #b3e1a4; }
.v-salmon { --face: #e2a18d; --edge: #a06b62; --front: #efb5a1; }
.v-gray { --face: #9ab2c2; }
.v-blue { --face: #5895d4; --edge: #31577c; }
.v-fade { --face: #91baf4; --edge: #7ba9ec; }
.v-red { --face: #d1c6bd; --edge: #a23e35; --front: #df5b50; }
.v-redtop { --face: #dd5a4c; --edge: #873f38; --front: #cdc5bc; }

.dialog { position: absolute; left: 380px; top: 150px; width: 129px; padding: 0 4px 4px; border: 1px solid #44536a; border-radius: 4px 4px 2px 2px; background: linear-gradient(#858585, #a1a1a1 14%, #eee 28%, #777 31%, #707070); box-shadow: inset 0 0 0 1px #b9bdc2; font: 7px/8px "Liberation Sans", sans-serif; color: #333; }
.dialog header { display: flex; align-items: center; height: 19px; }
.dialog header > svg { width: 10px; height: 10px; }
.dialog h3 { flex: 1; padding-left: 5px; margin-right: 28px; font: 8px/12px "Open Sans", sans-serif; color: #222; background: linear-gradient(90deg, #c6c6c6, #b9b9b9 60%, transparent); }
.close { align-self: flex-start; width: 33px; height: 12px; display: grid; place-items: center; background: linear-gradient(#d39a8d, #b04836 50%, #a83625); border: 1px solid #5d2d28; border-top: 0; border-radius: 0 0 3px 3px; }
.close svg { width: 7px; height: 7px; }
.body { padding-bottom: 3px; background: linear-gradient(#fbfcff, #e1e8f3 30%, #d8e3f0 70%, #eef2f7); border: 1px solid #d9dee5; }
.body h4 { text-align: center; line-height: 8px; margin-bottom: -2px; }
.field { display: flex; align-items: center; justify-content: flex-end; gap: 7px; height: 16px; padding-right: 14px; }
.field.border { margin: 11px 0 4px; padding-right: 5px; gap: 5px; }
.combo { position: relative; width: 46px; height: 14px; }
.combo select { width: 100%; height: 100%; appearance: none; padding: 0 2px; border: 1px solid #6d7076; border-right-color: #c7c9cc; border-bottom-color: #c7c9cc; background: #fcfcfd; font-size: 8px; line-height: 10px; }
.combo svg { position: absolute; right: 1px; top: 1px; width: 11px; height: 12px; border: 1px solid #bbb; background: #ececec; pointer-events: none; }
fieldset { margin: 0; padding: 0; border: 0; min-width: 0; }
legend { margin: 0 auto; padding: 0; line-height: 8px; }
fieldset label { display: flex; align-items: center; gap: 3px; height: 16px; padding-left: 21px; }
legend + label { margin-top: -2px; }
fieldset input { appearance: none; width: 8px; height: 8px; border: 1px solid #85898f; border-radius: 50%; background: #eef1f4; }
fieldset input:checked { background: radial-gradient(circle, #204f50 0 2px, #dfe7ec 3px); }
.actions { display: flex; gap: 7px; margin-top: 11px; padding-left: 24px; }
.actions button { width: 31px; height: 15px; border: 1px solid #4a5563; border-radius: 4px; background: linear-gradient(#f2f4f6, #cbd3dc); }
.ok span { display: block; margin: 1px; outline: 1px dotted #777; line-height: 10px; }
.halo { position: absolute; left: 34px; top: 142px; width: 49px; height: 49px; border-radius: 50%; background: #f3f76c; mix-blend-mode: multiply; pointer-events: none; }
.pointer { position: absolute; left: 57px; top: 167px; width: 11px; height: 15px; pointer-events: none; }

.status { display: flex; align-items: center; flex: none; height: 26px; padding-bottom: 4px; background: linear-gradient(#c5defb 0 21px, #6f94c5 21px 22px, #d3e4f8 22px); }
.status > input { width: 297px; height: 12px; background: #fcfdff; }
.format { display: flex; align-items: center; height: 19px; margin-left: 4px; padding-left: 7px; border-left: 1px dotted #6284b4; background: #d9e8fa; }
.format button { flex: none; display: grid; place-items: center; }
.sheet { width: 20px; height: 13px; }
.format .caret { margin: 0 7px; color: #446ca3; }
.format i { width: 1px; height: 12px; margin-right: 5px; margin-left: -3px; background: #94afd2; }
.format .swatch { width: 18px; height: 12px; margin-left: 2px; background: #000; border-radius: 1px; }
.format .line { width: 87px; height: 13px; background: #fcfdff; }
.line span { width: 78px; height: 1px; background: #777; }
.format .box { margin: 0 5px 0 3px; }
.weight { width: 23px; height: 13px; padding-left: 3px; background: #fff; }
.brush svg { width: 12px; height: 12px; }
.format .brush { padding: 0 4px; }
```
